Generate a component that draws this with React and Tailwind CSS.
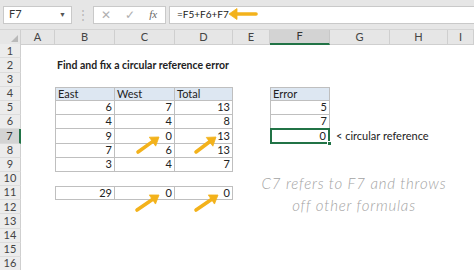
import React from 'react';

const cols = ['A', 'B', 'C', 'D', 'E', 'F', 'G', 'H', 'I'];

const bd = 'border-[#bfbfbf]';

// cells with content / borders, keyed by address
const cells = {
  B2: { text: 'Find and fix a circular reference error', cls: 'font-bold text-[10.5px] whitespace-nowrap overflow-visible pl-[2px] z-10' },
  B4: { text: 'East', cls: `bg-[#dde7f2] pl-[2px] border-t border-l border-r border-b ${bd}` },
  C4: { text: 'West', cls: `bg-[#dde7f2] pl-[2px] border-t border-r border-b ${bd}` },
  D4: { text: 'Total', cls: `bg-[#dde7f2] pl-[2px] border-t border-r border-b ${bd}` },
  F4: { text: 'Error', cls: `bg-[#dde7f2] pl-[2px] border-t border-l border-r border-b ${bd}` },
  G7: { text: '< circular reference', cls: 'whitespace-nowrap overflow-visible pl-[6px] z-10' },
};

const body = [
  [5, 6, 7, 13],
  [6, 4, 4, 8],
  [7, 9, 0, 13],
  [8, 7, 6, 13],
  [9, 3, 4, 7],
  [11, 29, 0, 0],
];

body.forEach(([r, b, c, d]) => {
  const top = r === 11 ? ' border-t' : '';
  cells['B' + r] = { text: b, cls: `justify-end pr-[2px] border-l border-r border-b ${bd}${top}` };
  cells['C' + r] = { text: c, cls: `justify-end pr-[2px] border-r border-b ${bd}${top}` };
  cells['D' + r] = { text: d, cls: `justify-end pr-[2px] border-r border-b ${bd}${top}` };
});

cells.F5 = { text: 5, cls: `justify-end pr-[2px] border-l border-r border-b ${bd}` };
cells.F6 = { text: 7, cls: `justify-end pr-[2px] border-l border-r border-b ${bd}` };
cells.F7 = { text: 0, cls: `justify-end pr-[3px] border-l border-r border-b ${bd}`, selected: true };

const Arrow = ({ x1, y1, x2, y2 }) => {
  const a = Math.atan2(y2 - y1, x2 - x1);
  const len = 8;
  const w = 5.5;
  const bx = x2 - len * Math.cos(a);
  const by = y2 - len * Math.sin(a);
  const px = -Math.sin(a) * w;
  const py = Math.cos(a) * w;
  return (
    <g fill="#f3b21b" stroke="#f3b21b">
      <line x1={x1} y1={y1} x2={bx} y2={by} strokeWidth="3.6" strokeLinecap="round" />
      <polygon points={`${x2},${y2} ${bx + px},${by + py} ${bx - px},${by - py}`} strokeWidth="0.8" strokeLinejoin="round" />
    </g>
  );
};

export default function App() {
  const rows = Array.from({ length: 16 }, (_, i) => i + 1);
  return (
    <div className="relative w-[474px] h-[270px] overflow-hidden bg-white text-[11px] text-[#222] font-['Lato','Liberation_Sans',sans-serif]">
      {/* formula bar */}
      <div className="h-[30px] bg-[#e6e6e6] flex items-center pl-[3px] pr-0 border-b border-[#d4d4d4]">
        <div className="w-[69px] h-[18px] bg-white border border-[#c9c9c9] flex items-center justify-between pl-[5px] pr-[5px] text-[#333]">
          <span>F7</span>
          <span className="text-[7px] text-[#555]">▼</span>
        </div>
        <div className="w-[21px] flex justify-center text-[#b5b5b5] text-[12px] leading-none">⋮</div>
        <div className="w-[73px] h-[18px] bg-white border border-[#c9c9c9] flex items-center text-[#b0b0b0]">
          <span className="w-[24px] text-center text-[12px]">✕</span>
          <span className="w-[24px] text-center text-[12px]">✓</span>
          <span className="w-[24px] text-center italic font-['Liberation_Serif',serif] text-[#666] text-[11px]">fx</span>
        </div>
        <div className="flex-1 ml-[3px] h-[18px] bg-white border border-r-0 border-[#c9c9c9] flex items-center pl-[7px] text-[10px] text-[#222]">
          =F5+F6+F7
        </div>
      </div>

      {/* sheet grid */}
      <div className="grid grid-cols-[21px_34px_60px_60px_58px_37px_60px_60px_58px_26px] auto-rows-[14.2px]">
        {/* header row */}
        <div className="h-[14.5px] bg-[#e6e6e6] border-r border-b border-[#cfcfcf] flex items-end justify-end p-[2px]">
          <div className="w-0 h-0 border-l-[7px] border-l-transparent border-b-[7px] border-b-[#b9b9b9]" />
        </div>
        {cols.map((c) => (
          <div
            key={c}
            className={
              c === 'F'
                ? 'h-[14.5px] bg-[#d3d3d3] border-r border-[#c8c8c8] border-b-2 border-b-[#217346] flex items-center justify-center text-[#333]'
                : 'h-[14.5px] bg-[#e6e6e6] border-r border-b border-[#cfcfcf] flex items-center justify-center text-[#444]'
            }
          >
            {c}
          </div>
        ))}
        {rows.map((r) => (
          <React.Fragment key={r}>
            <div
              className={
                r === 7
                  ? 'bg-[#d3d3d3] border-r-2 border-r-[#217346] border-b border-b-[#dadada] flex items-center justify-center text-[#333]'
                  : 'bg-[#ececec] border-r border-[#cfcfcf] border-b border-b-[#dcdcdc] flex items-center justify-center text-[#444]'
              }
            >
              {r}
            </div>
            {cols.map((c) => {
              const cell = cells[c + r];
              if (!cell) return <div key={c} />;
              return (
                <div key={c} className={`relative flex items-center ${cell.cls}`}>
                  {cell.text}
                  {cell.selected && (
                    <>
                      <div className="absolute -left-[1px] -top-[1px] -right-[1px] -bottom-[1px] border-2 border-[#217346]" />
                      <div className="absolute -right-[3px] -bottom-[3px] w-[5px] h-[5px] bg-[#217346] border border-white" />
                    </>
                  )}
                </div>
              );
            })}
          </React.Fragment>
        ))}
      </div>

      {/* floating text box */}
      <div className="absolute left-[244px] top-[172px] w-[220px] text-center text-[15px] leading-[22px] text-[#a3a3a3] font-light italic font-['Lato',sans-serif] tracking-[0.8px] whitespace-nowrap">
        C7 refers to F7 and throws
        <br />
        off other formulas
      </div>

      {/* arrows */}
      <svg className="absolute inset-0 pointer-events-none" width="474" height="270">
        <Arrow x1={256} y1={14} x2={229} y2={14} />
        <Arrow x1={138} y1={152} x2={159} y2={137} />
        <Arrow x1={196} y1={152} x2={216} y2={137} />
        <Arrow x1={137} y1={210} x2={159} y2={195} />
        <Arrow x1={196} y1={210} x2={218} y2={195} />
      </svg>
    </div>
  );
}
